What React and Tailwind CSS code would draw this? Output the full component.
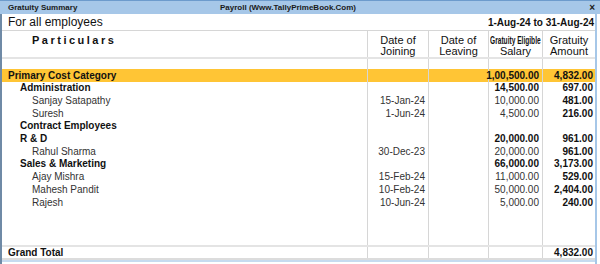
import React from "react";

const rows = [
  { label: "Administration", indent: 1, bold: true, salary: "14,500.00", amount: "697.00" },
  { label: "Sanjay Satapathy", indent: 2, doj: "15-Jan-24", salary: "10,000.00", amount: "481.00" },
  { label: "Suresh", indent: 2, doj: "1-Jun-24", salary: "4,500.00", amount: "216.00" },
  { label: "Contract Employees", indent: 1, bold: true },
  { label: "R & D", indent: 1, bold: true, salary: "20,000.00", amount: "961.00" },
  { label: "Rahul Sharma", indent: 2, doj: "30-Dec-23", salary: "20,000.00", amount: "961.00" },
  { label: "Sales & Marketing", indent: 1, bold: true, salary: "66,000.00", amount: "3,173.00" },
  { label: "Ajay Mishra", indent: 2, doj: "15-Feb-24", salary: "11,000.00", amount: "529.00" },
  { label: "Mahesh Pandit", indent: 2, doj: "10-Feb-24", salary: "50,000.00", amount: "2,404.00" },
  { label: "Rajesh", indent: 2, doj: "10-Jun-24", salary: "5,000.00", amount: "240.00" },
];

function Cells({ c0, c1, c2, c3, c4, h, className = "", c0cls = "", c3cls = "", c4cls = "" }) {
  return (
    <div className={`flex ${h} ${className}`}>
      <div className={`w-[365px] shrink-0 flex items-center ${c0cls}`}>{c0}</div>
      <div className="w-[61px] shrink-0 border-l border-[#d6d6d6] flex items-center justify-end pr-[3px] text-[#333]">{c1}</div>
      <div className="w-[60px] shrink-0 border-l border-[#d6d6d6] flex items-center justify-end pr-[3px] text-[#333]">{c2}</div>
      <div className={`w-[54px] shrink-0 border-l border-[#d6d6d6] flex items-center justify-end pr-[3px] ${c3cls}`}>{c3}</div>
      <div className={`w-[53px] shrink-0 border-l border-[#d6d6d6] flex items-center justify-end pr-[2px] ${c4cls}`}>{c4}</div>
    </div>
  );
}

export default function App() {
  return (
    <div
      className="w-[600px] h-[264px] bg-white overflow-hidden flex flex-col text-[#111]"
      style={{ fontFamily: '"Liberation Sans", Arial, sans-serif' }}
    >
      {/* Title bar */}
      <div className="h-[14px] shrink-0 bg-[#a6c7e8] border-t border-[#6d9bcc] flex items-center text-[8px] font-bold text-[#1a1a1a] relative">
        <span className="pl-[8px]">Gratuity Summary</span>
        <span className="absolute left-[220px]">Payroll (Www.TallyPrimeBook.Com)</span>
        <span className="absolute right-[5px] text-[10px] leading-none">×</span>
      </div>

      <div className="flex-1 flex">
        <div className="w-[597px] flex flex-col border-l-2 border-[#6f8aa6] border-r-2 border-r-[#a6c7e8]">
          {/* For all employees */}
          <div className="h-[16px] shrink-0 flex items-center justify-between pl-[6px] pr-[1px]">
            <span className="text-[12px] text-[#111]">For all employees</span>
            <span className="text-[10px] font-bold text-[#111]">1-Aug-24 to 31-Aug-24</span>
          </div>
          <div className="h-[1px] shrink-0 bg-[#d6d6d6]" />

          {/* Header */}
          <div className="flex h-[26px] shrink-0 text-[11px] leading-[11px] text-[#111]">
            <div className="w-[365px] shrink-0 pl-[30px] pt-[4px] font-bold tracking-[2.5px]">Particulars</div>
            <div className="w-[61px] shrink-0 border-l border-[#d6d6d6] pt-[4px] text-center">
              <div>Date of</div>
              <div>Joining</div>
            </div>
            <div className="w-[60px] shrink-0 border-l border-[#d6d6d6] pt-[4px] text-center">
              <div>Date of</div>
              <div>Leaving</div>
            </div>
            <div className="w-[54px] shrink-0 border-l border-[#d6d6d6] pt-[4px] text-center">
              <div className="h-[11px] flex items-center justify-center whitespace-nowrap">
                <span className="inline-block text-[10px] font-bold scale-x-[0.66] origin-center">Gratuity Eligible</span>
              </div>
              <div>Salary</div>
            </div>
            <div className="w-[53px] shrink-0 border-l border-[#d6d6d6] pt-[4px] text-center">
              <div>Gratuity</div>
              <div>Amount</div>
            </div>
          </div>
          <div className="h-[2px] shrink-0 bg-[#e4e4e4]" />

          {/* body */}
          <div className="flex flex-col flex-1 text-[10px] leading-none">
            <Cells h="h-[10px] shrink-0" />
            <Cells
              h="h-[13px] shrink-0"
              className="bg-[#ffc535] font-bold text-[#111]"
              c0cls="pl-[6px]"
              c0="Primary Cost Category"
              c3="1,00,500.00"
              c4="4,832.00"
            />
            {rows.map((r, i) => (
              <Cells
                key={i}
                h="h-[12.7px] shrink-0"
                c0cls={r.indent === 1 ? "pl-[18px] font-bold text-[#111]" : "pl-[30px] text-[#333]"}
                c0={r.label}
                c1={r.doj}
                c3={r.salary}
                c3cls={r.bold ? "font-bold text-[#111]" : "text-[#333]"}
                c4={r.amount}
                c4cls="font-bold text-[#111]"
              />
            ))}
            <Cells h="flex-1" />
            <div className="h-[2px] shrink-0 bg-[#e4e4e4]" />
            <Cells
              h="h-[11px] shrink-0"
              className="font-bold text-[#111]"
              c0cls="pl-[6px]"
              c0="Grand Total"
              c4="4,832.00"
            />
            <div className="h-[2px] shrink-0 bg-[#dcdcdc]" />
            <div className="h-[2px] shrink-0 bg-[#c6dbf0]" />
            <div className="h-[2px] shrink-0" />
          </div>
        </div>
      </div>
    </div>
  );
}
